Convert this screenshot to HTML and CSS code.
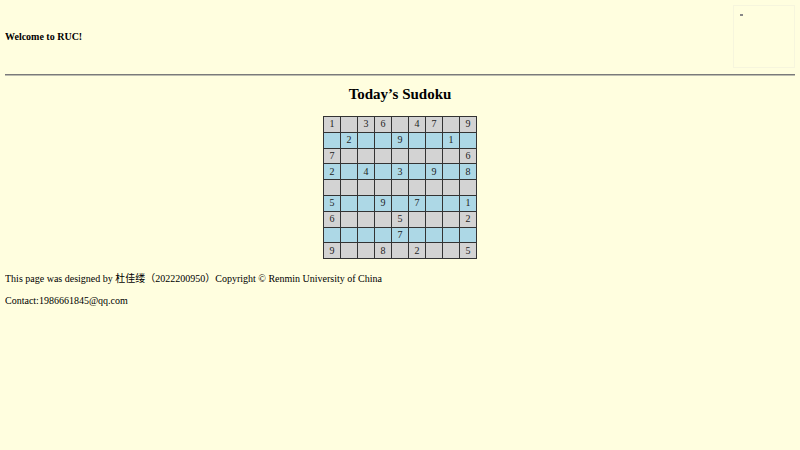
FILE: index.html
```html
<!DOCTYPE html>
<html lang="en">
<head>
<meta charset="utf-8">
<title>Today's Sudoku</title>
<link rel="stylesheet" href="styles.css">
</head>
<body>
<div class="header">
  <h5 class="welcome">Welcome to RUC!</h5>
  <div class="logo"><span class="broken"></span></div>
</div>
<hr class="rule">
<h3 class="title">Today’s Sudoku</h3>
<table class="sudoku">
  <tr class="g"><td>1</td><td></td><td>3</td><td>6</td><td></td><td>4</td><td>7</td><td></td><td>9</td></tr>
  <tr class="b"><td></td><td>2</td><td></td><td></td><td>9</td><td></td><td></td><td>1</td><td></td></tr>
  <tr class="g"><td>7</td><td></td><td></td><td></td><td></td><td></td><td></td><td></td><td>6</td></tr>
  <tr class="b"><td>2</td><td></td><td>4</td><td></td><td>3</td><td></td><td>9</td><td></td><td>8</td></tr>
  <tr class="g"><td></td><td></td><td></td><td></td><td></td><td></td><td></td><td></td><td></td></tr>
  <tr class="b"><td>5</td><td></td><td></td><td>9</td><td></td><td>7</td><td></td><td></td><td>1</td></tr>
  <tr class="g"><td>6</td><td></td><td></td><td></td><td>5</td><td></td><td></td><td></td><td>2</td></tr>
  <tr class="b"><td></td><td></td><td></td><td></td><td>7</td><td></td><td></td><td></td><td></td></tr>
  <tr class="g"><td>9</td><td></td><td></td><td>8</td><td></td><td>2</td><td></td><td></td><td>5</td></tr>
</table>
<p class="foot first">This page was designed by 杜佳缕（2022200950）Copyright © Renmin University of China</p>
<p class="foot">Contact:1986661845@qq.com</p>
</body>
</html>
```
FILE: styles.css
```css
html { background: #fffedf; }
body {
  margin: 5px;
  background: #fffedf;
  font-family: "Liberation Serif", "Noto Sans CJK SC", serif;
  font-size: 10px;
  color: #000;
}
.header {
  display: flex;
  justify-content: space-between;
  align-items: center;
  height: 63px;
}
.welcome {
  margin: 0;
  font-size: 10px;
  font-weight: bold;
  line-height: 12px;
}
.logo {
  width: 60px;
  height: 61px;
  border: 1px solid #f6f5dd;
  position: relative;
}
.broken {
  position: absolute;
  left: 6px;
  top: 8px;
  width: 3px;
  height: 2px;
  background: #888;
}
.rule {
  margin: 6px 0 0 0;
  height: 0;
  border: 0;
  border-top: 1px solid #7a7a7a;
  border-bottom: 1px solid #bdbdb0;
}
.title {
  margin: 10px 0 13px 0;
  text-align: center;
  font-size: 15px;
  line-height: 17px;
  font-weight: bold;
}
.sudoku {
  margin: 0 auto;
  border-collapse: collapse;
  table-layout: fixed;
  width: 153px;
  border: 1px solid #333;
}
.sudoku td {
  border: 1px solid #333;
  padding: 0;
  width: 16px;
  height: 14.8px;
  text-align: center;
  font-size: 10px;
  line-height: 12px;
  color: #222;
}
.sudoku tr.g { background: #d3d3d3; }
.sudoku tr.b { background: #add8e6; }
.foot {
  margin: 10px 0;
  line-height: 12px;
}
.foot.first { margin-top: 14px; }
```
